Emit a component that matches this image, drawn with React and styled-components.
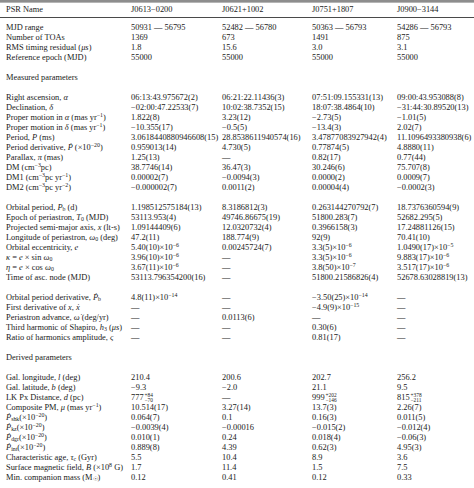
import styled, { createGlobalStyle } from 'styled-components'

const Global = createGlobalStyle`
  body {
    margin: 0;
    background: #ffffff;
  }
`

const Page = styled.div`
  width: 474px;
  height: 488px;
  overflow: hidden;
  background: #fff;
  color: #1a1a1a;
  font-family: "Liberation Serif", "DejaVu Serif", serif;
  font-size: 8.4px;
`

const TopRule = styled.div`
  height: 2px;
  background: #8d8d8d;
  border-bottom: 1px solid #b5b5b5;
`

const HeadRule = styled.div`
  height: 1px;
  background: #4a4a4a;
  margin-bottom: 5px;
`

const Row = styled.div`
  display: grid;
  grid-template-columns: 125px 91px 90px 85px 1fr;
  align-items: center;
  padding-left: 6px;
  height: ${({ $h }) => $h || 10}px;
  line-height: ${({ $h }) => $h || 10}px;
  white-space: nowrap;
`

const Section = styled.div`
  padding-left: 6px;
  height: 10px;
  line-height: 10px;
`

const Gap = styled.div`
  height: 10px;
`

const I = styled.i`
  font-style: italic;
`

const Sup = styled.sup`
  font-size: 0.7em;
  line-height: 0;
  vertical-align: 0.45em;
`

const Sub = styled.sub`
  font-size: 0.7em;
  line-height: 0;
  vertical-align: -0.25em;
`

const Err = styled.span`
  display: inline-flex;
  flex-direction: column;
  font-size: 0.64em;
  line-height: 0.95em;
  vertical-align: middle;
  margin-left: 1px;
`

const sci = (m, e) => (
  <>
    {m}×10<Sup>{e}</Sup>
  </>
)

const asym = (v, up, lo) => (
  <>
    {v}
    <Err>
      <span>+{up}</span>
      <span>−{lo}</span>
    </Err>
  </>
)

const Pd = ({ s }) => (
  <>
    <I>Ṗ</I>
    {s && <Sub>{s}</Sub>}
  </>
)

const D = '—'

const rows = [
  ['MJD range', '50931 — 56795', '52482 — 56780', '50363 — 56793', '54286 — 56793'],
  ['Number of TOAs', '1369', '673', '1491', '875'],
  [<>RMS timing residual (<I>μs</I>)</>, '1.8', '15.6', '3.0', '3.1'],
  ['Reference epoch (MJD)', '55000', '55000', '55000', '55000'],
  'gap',
  'Measured parameters',
  'gap',
  [<>Right ascension, <I>α</I></>, '06:13:43.975672(2)', '06:21:22.11436(3)', '07:51:09.155331(13)', '09:00:43.953088(8)'],
  [<>Declination, <I>δ</I></>, '−02:00:47.22533(7)', '10:02:38.7352(15)', '18:07:38.4864(10)', '−31:44:30.89520(13)'],
  [<>Proper motion in <I>α</I> (mas yr<Sup>−1</Sup>)</>, '1.822(8)', '3.23(12)', '−2.73(5)', '−1.01(5)'],
  [<>Proper motion in <I>δ</I> (mas yr<Sup>−1</Sup>)</>, '−10.355(17)', '−0.5(5)', '−13.4(3)', '2.02(7)'],
  [<>Period, <I>P</I> (ms)</>, '3.0618440880946608(15)', '28.8538611940574(16)', '3.47877083927942(4)', '11.1096493380938(6)'],
  [<>Period derivative, <Pd /> (×10<Sup>−20</Sup>)</>, '0.959013(14)', '4.730(5)', '0.77874(5)', '4.8880(11)'],
  [<>Parallax, <I>π</I> (mas)</>, '1.25(13)', D, '0.82(17)', '0.77(44)'],
  [<>DM (cm<Sup>−3</Sup>pc)</>, '38.7746(14)', '36.47(3)', '30.246(6)', '75.707(8)'],
  [<>DM1 (cm<Sup>−3</Sup>pc yr<Sup>−1</Sup>)</>, '0.00002(7)', '−0.0094(3)', '0.0000(2)', '0.0009(7)'],
  [<>DM2 (cm<Sup>−3</Sup>pc yr<Sup>−2</Sup>)</>, '−0.000002(7)', '0.0011(2)', '0.00004(4)', '−0.0002(3)'],
  'gap',
  [<>Orbital period, <I>P</I><Sub>b</Sub> (d)</>, '1.198512575184(13)', '8.3186812(3)', '0.263144270792(7)', '18.7376360594(9)'],
  [<>Epoch of periastron, <I>T</I><Sub>0</Sub> (MJD)</>, '53113.953(4)', '49746.86675(19)', '51800.283(7)', '52682.295(5)'],
  [<>Projected semi-major axis, <I>x</I> (lt-s)</>, '1.09144409(6)', '12.0320732(4)', '0.3966158(3)', '17.24881126(15)'],
  [<>Longitude of periastron, <I>ω</I><Sub>0</Sub> (deg)</>, '47.2(11)', '188.774(9)', '92(9)', '70.41(10)'],
  [<>Orbital eccentricity, <I>e</I></>, sci('5.40(10)', '−6'), '0.00245724(7)', sci('3.3(5)', '−6'), sci('1.0490(17)', '−5')],
  [<><I>κ</I> = <I>e</I> × sin <I>ω</I><Sub>0</Sub></>, sci('3.96(10)', '−6'), D, sci('3.3(5)', '−6'), sci('9.883(17)', '−6')],
  [<><I>η</I> = <I>e</I> × cos <I>ω</I><Sub>0</Sub></>, sci('3.67(11)', '−6'), D, sci('3.8(50)', '−7'), sci('3.517(17)', '−6')],
  ['Time of asc. node (MJD)', '53113.796354200(16)', D, '51800.21586826(4)', '52678.63028819(13)'],
  'gap',
  [<>Orbital period derivative, <Pd s="b" /></>, sci('4.8(11)', '−14'), D, sci('−3.50(25)', '−14'), D],
  [<>First derivative of <I>x</I>, <I>ẋ</I></>, D, D, sci('−4.9(9)', '−15'), D],
  [<>Periastron advance, <I>ω̇</I> (deg/yr)</>, D, '0.0113(6)', D, D],
  [<>Third harmonic of Shapiro, <I>h</I><Sub>3</Sub> (<I>μs</I>)</>, D, D, '0.30(6)', D],
  [<>Ratio of harmonics amplitude, <I>ς</I></>, D, D, '0.81(17)', D],
  'gap',
  'Derived parameters',
  'gap',
  [<>Gal. longitude, <I>l</I> (deg)</>, '210.4', '200.6', '202.7', '256.2'],
  [<>Gal. latitude, <I>b</I> (deg)</>, '−9.3', '−2.0', '21.1', '9.5'],
  [<>LK Px Distance, <I>d</I> (pc)</>, asym('777', '84', '70'), D, asym('999', '202', '146'), asym('815', '378', '211')],
  [<>Composite PM, <I>μ</I> (mas yr<Sup>−1</Sup>)</>, '10.514(17)', '3.27(14)', '13.7(3)', '2.26(7)'],
  [<><Pd s="shk" />(×10<Sup>−20</Sup>)</>, '0.064(7)', '0.1', '0.16(3)', '0.011(5)'],
  [<><Pd s="kz" />(×10<Sup>−20</Sup>)</>, '−0.0039(4)', '−0.00016', '−0.015(2)', '−0.012(4)'],
  [<><Pd s="dgr" />(×10<Sup>−20</Sup>)</>, '0.010(1)', '0.24', '0.018(4)', '−0.06(3)'],
  [<><Pd s="int" />(×10<Sup>−20</Sup>)</>, '0.889(8)', '4.39', '0.62(3)', '4.95(3)'],
  [<>Characteristic age, <I>τ</I><Sub>c</Sub> (Gyr)</>, '5.5', '10.4', '8.9', '3.6'],
  [<>Surface magnetic field, <I>B</I> (×10<Sup>8</Sup> G)</>, '1.7', '11.4', '1.5', '7.5'],
  [<>Min. companion mass (M<Sub>☉</Sub>)</>, '0.12', '0.41', '0.12', '0.33'],
]

export default function App() {
  return (
    <Page>
      <Global />
      <TopRule />
      <Row $h={14}>
        <span>PSR Name</span>
        <span>J0613−0200</span>
        <span>J0621+1002</span>
        <span>J0751+1807</span>
        <span>J0900−3144</span>
      </Row>
      <HeadRule />
      {rows.map((r, i) => {
        if (r === 'gap') return <Gap key={i} />
        if (typeof r === 'string') return <Section key={i}>{r}</Section>
        return (
          <Row key={i}>
            {r.map((c, j) => (
              <span key={j}>{c}</span>
            ))}
          </Row>
        )
      })}
    </Page>
  )
}
